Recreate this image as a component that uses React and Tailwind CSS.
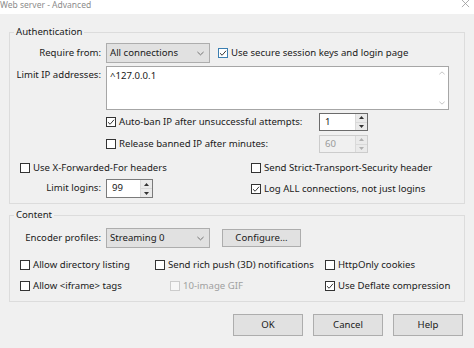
import React from "react";

function Cb({ checked = false, disabled = false, focus = false }) {
  const cls = disabled
    ? "w-[10px] h-[10px] border border-[#cccccc] bg-[#f7f7f7] flex items-center justify-center shrink-0"
    : focus
    ? "w-[10px] h-[10px] border border-[#3c7fb1] bg-white flex items-center justify-center shrink-0"
    : "w-[10px] h-[10px] border border-[#333333] bg-white flex items-center justify-center shrink-0";
  return (
    <span className={cls}>
      {checked && (
        <svg viewBox="0 0 10 10" className="w-[8px] h-[8px]">
          <path d="M1.2 5.2 L3.9 7.8 L8.8 2.2" stroke="#1f1f1f" strokeWidth="1.1" fill="none" />
        </svg>
      )}
    </span>
  );
}

function Check({ label, checked, disabled, focus }) {
  return (
    <div className={disabled ? "flex items-center gap-[3px] h-[14px] text-[#a0a0a0]" : "flex items-center gap-[3px] h-[14px]"}>
      <Cb checked={checked} disabled={disabled} focus={focus} />
      <span className="whitespace-nowrap leading-[14px]">{label}</span>
    </div>
  );
}

function Chevron() {
  return (
    <svg viewBox="0 0 8 5" className="w-[7px] h-[5px]">
      <path d="M0.5 0.8 L4 4 L7.5 0.8" stroke="#555" strokeWidth="0.9" fill="none" />
    </svg>
  );
}

function Select({ value }) {
  return (
    <div className="w-[104px] h-[20px] border border-[#adadad] bg-[#e1e1e1] flex items-center justify-between pl-[3px] pr-[5px]">
      <span className="whitespace-nowrap leading-[18px]">{value}</span>
      <Chevron />
    </div>
  );
}

function SpinArrows({ disabled }) {
  const c = disabled ? "#b0b0b0" : "#333";
  return (
    <div className="w-[12px] flex flex-col bg-[#eaeaea] border-l border-[#d9d9d9]">
      <div className="flex-1 flex items-center justify-center border-b border-[#d9d9d9]">
        <svg viewBox="0 0 5 3" className="w-[5px] h-[3px]"><path d="M0 3 L2.5 0 L5 3 Z" fill={c} /></svg>
      </div>
      <div className="flex-1 flex items-center justify-center">
        <svg viewBox="0 0 5 3" className="w-[5px] h-[3px]"><path d="M0 0 L2.5 3 L5 0 Z" fill={c} /></svg>
      </div>
    </div>
  );
}

function Spin({ value, disabled = false, focus = false, w = "w-[49px]", h = "h-[18px]" }) {
  const box = disabled
    ? "flex border border-[#cccccc] bg-[#f0f0f0] text-[#9a9a9a]"
    : focus
    ? "flex border border-[#6b6b6b] bg-white"
    : "flex border border-[#7a7a7a] bg-white";
  return (
    <div className={`${box} ${w} ${h}`}>
      <span className="flex-1 pl-[5px] flex items-center">{value}</span>
      <SpinArrows disabled={disabled} />
    </div>
  );
}

function Button({ children, w = "w-[70px]", h = "h-[22px]" }) {
  return (
    <div className={`${w} ${h} border border-[#adadad] bg-[#e1e1e1] flex items-center justify-center`}>
      {children}
    </div>
  );
}

export default function App() {
  return (
    <div className="w-[474px] h-[348px] overflow-hidden bg-white font-['Noto_Sans',sans-serif] text-[9.6px] text-[#1a1a1a]">
      {/* title bar */}
      <div className="h-[14px] flex justify-between items-start overflow-hidden">
        <span className="text-[#8c8c8c] text-[8.5px] leading-[12px] -mt-[1px] whitespace-nowrap">Web server - Advanced</span>
        <svg viewBox="0 0 10 10" className="w-[9px] h-[9px] mr-[4px] -mt-[1px]">
          <path d="M1 1 L9 9 M9 1 L1 9" stroke="#9a9a9a" strokeWidth="0.9" />
        </svg>
      </div>

      {/* body */}
      <div className="h-[334px] bg-[#f0f0f0] flex flex-col">
        {/* Authentication */}
        <fieldset className="mt-[10px] ml-[9px] w-[456px] border border-[#dcdcdc] px-[4px] m-0">
          <legend className="px-[2px] leading-[16px]">Authentication</legend>
          <div className="flex flex-col mt-[3px] mb-[5px]">
            <div className="flex items-center h-[20px]">
              <span className="w-[87px] text-right pr-0 whitespace-nowrap">Require from:</span>
              <div className="ml-[5px]"><Select value="All connections" /></div>
              <div className="ml-[8px]"><Check label="Use secure session keys and login page" checked focus /></div>
            </div>
            <div className="flex mt-[3px] h-[44px]">
              <span className="w-[87px] text-right whitespace-nowrap pt-[2px]">Limit IP addresses:</span>
              <div className="ml-[5px] w-[343px] h-[44px] border border-[#a6a6a6] bg-white flex justify-between">
                <span className="pl-[3px] pt-[2px]">^127.0.0.1</span>
                <div className="w-[12px] flex flex-col justify-between items-center py-[4px]">
                  <svg viewBox="0 0 8 5" className="w-[6px] h-[4px]"><path d="M0.5 4.2 L4 1 L7.5 4.2" stroke="#a8a8a8" strokeWidth="0.9" fill="none" /></svg>
                  <svg viewBox="0 0 8 5" className="w-[6px] h-[4px]"><path d="M0.5 0.8 L4 4 L7.5 0.8" stroke="#a8a8a8" strokeWidth="0.9" fill="none" /></svg>
                </div>
              </div>
            </div>
            <div className="flex items-center mt-[3px] h-[18px] pl-[92px]">
              <div className="w-[213px]"><Check label="Auto-ban IP after unsuccessful attempts:" checked /></div>
              <Spin value="1" focus />
            </div>
            <div className="flex items-center mt-[4px] h-[18px] pl-[92px]">
              <div className="w-[213px]"><Check label="Release banned IP after minutes:" /></div>
              <Spin value="60" disabled />
            </div>
            <div className="flex items-center mt-[8px] h-[14px]">
              <div className="w-[237px] pl-[6px]"><Check label="Use X-Forwarded-For headers" /></div>
              <Check label="Send Strict-Transport-Security header" />
            </div>
            <div className="flex items-center mt-[4px] h-[19px]">
              <div className="w-[237px] flex items-center">
                <span className="w-[87px] text-right whitespace-nowrap">Limit logins:</span>
                <div className="ml-[5px]"><Spin value="99" w="w-[47px]" h="h-[19px]" /></div>
              </div>
              <Check label="Log ALL connections, not just logins" checked />
            </div>
          </div>
        </fieldset>

        {/* Content */}
        <fieldset className="mt-[3px] ml-[9px] w-[456px] border border-[#dcdcdc] px-[4px] m-0">
          <legend className="px-[2px] leading-[16px]">Content</legend>
          <div className="flex flex-col mt-[5px] mb-[8px]">
            <div className="flex items-center h-[20px]">
              <span className="w-[87px] text-right whitespace-nowrap">Encoder profiles:</span>
              <div className="ml-[5px]"><Select value="Streaming 0" /></div>
              <div className="ml-[12px]"><Button w="w-[79px]" h="h-[18px]">Configure...</Button></div>
            </div>
            <div className="flex items-center mt-[10px] h-[14px]">
              <div className="w-[141px] pl-[6px]"><Check label="Allow directory listing" /></div>
              <div className="w-[170px]"><Check label="Send rich push (3D) notifications" /></div>
              <Check label="HttpOnly cookies" />
            </div>
            <div className="flex items-center mt-[7px] h-[14px]">
              <div className="w-[141px] pl-[6px]"><Check label="Allow <iframe> tags" /></div>
              <div className="w-[170px] pl-[15px]"><Check label="10-image GIF" disabled /></div>
              <Check label="Use Deflate compression" checked />
            </div>
          </div>
        </fieldset>

        {/* buttons */}
        <div className="flex justify-end gap-[10px] pr-[11px] mt-[12px]">
          <Button>OK</Button>
          <Button>Cancel</Button>
          <Button>Help</Button>
        </div>
      </div>
    </div>
  );
}
